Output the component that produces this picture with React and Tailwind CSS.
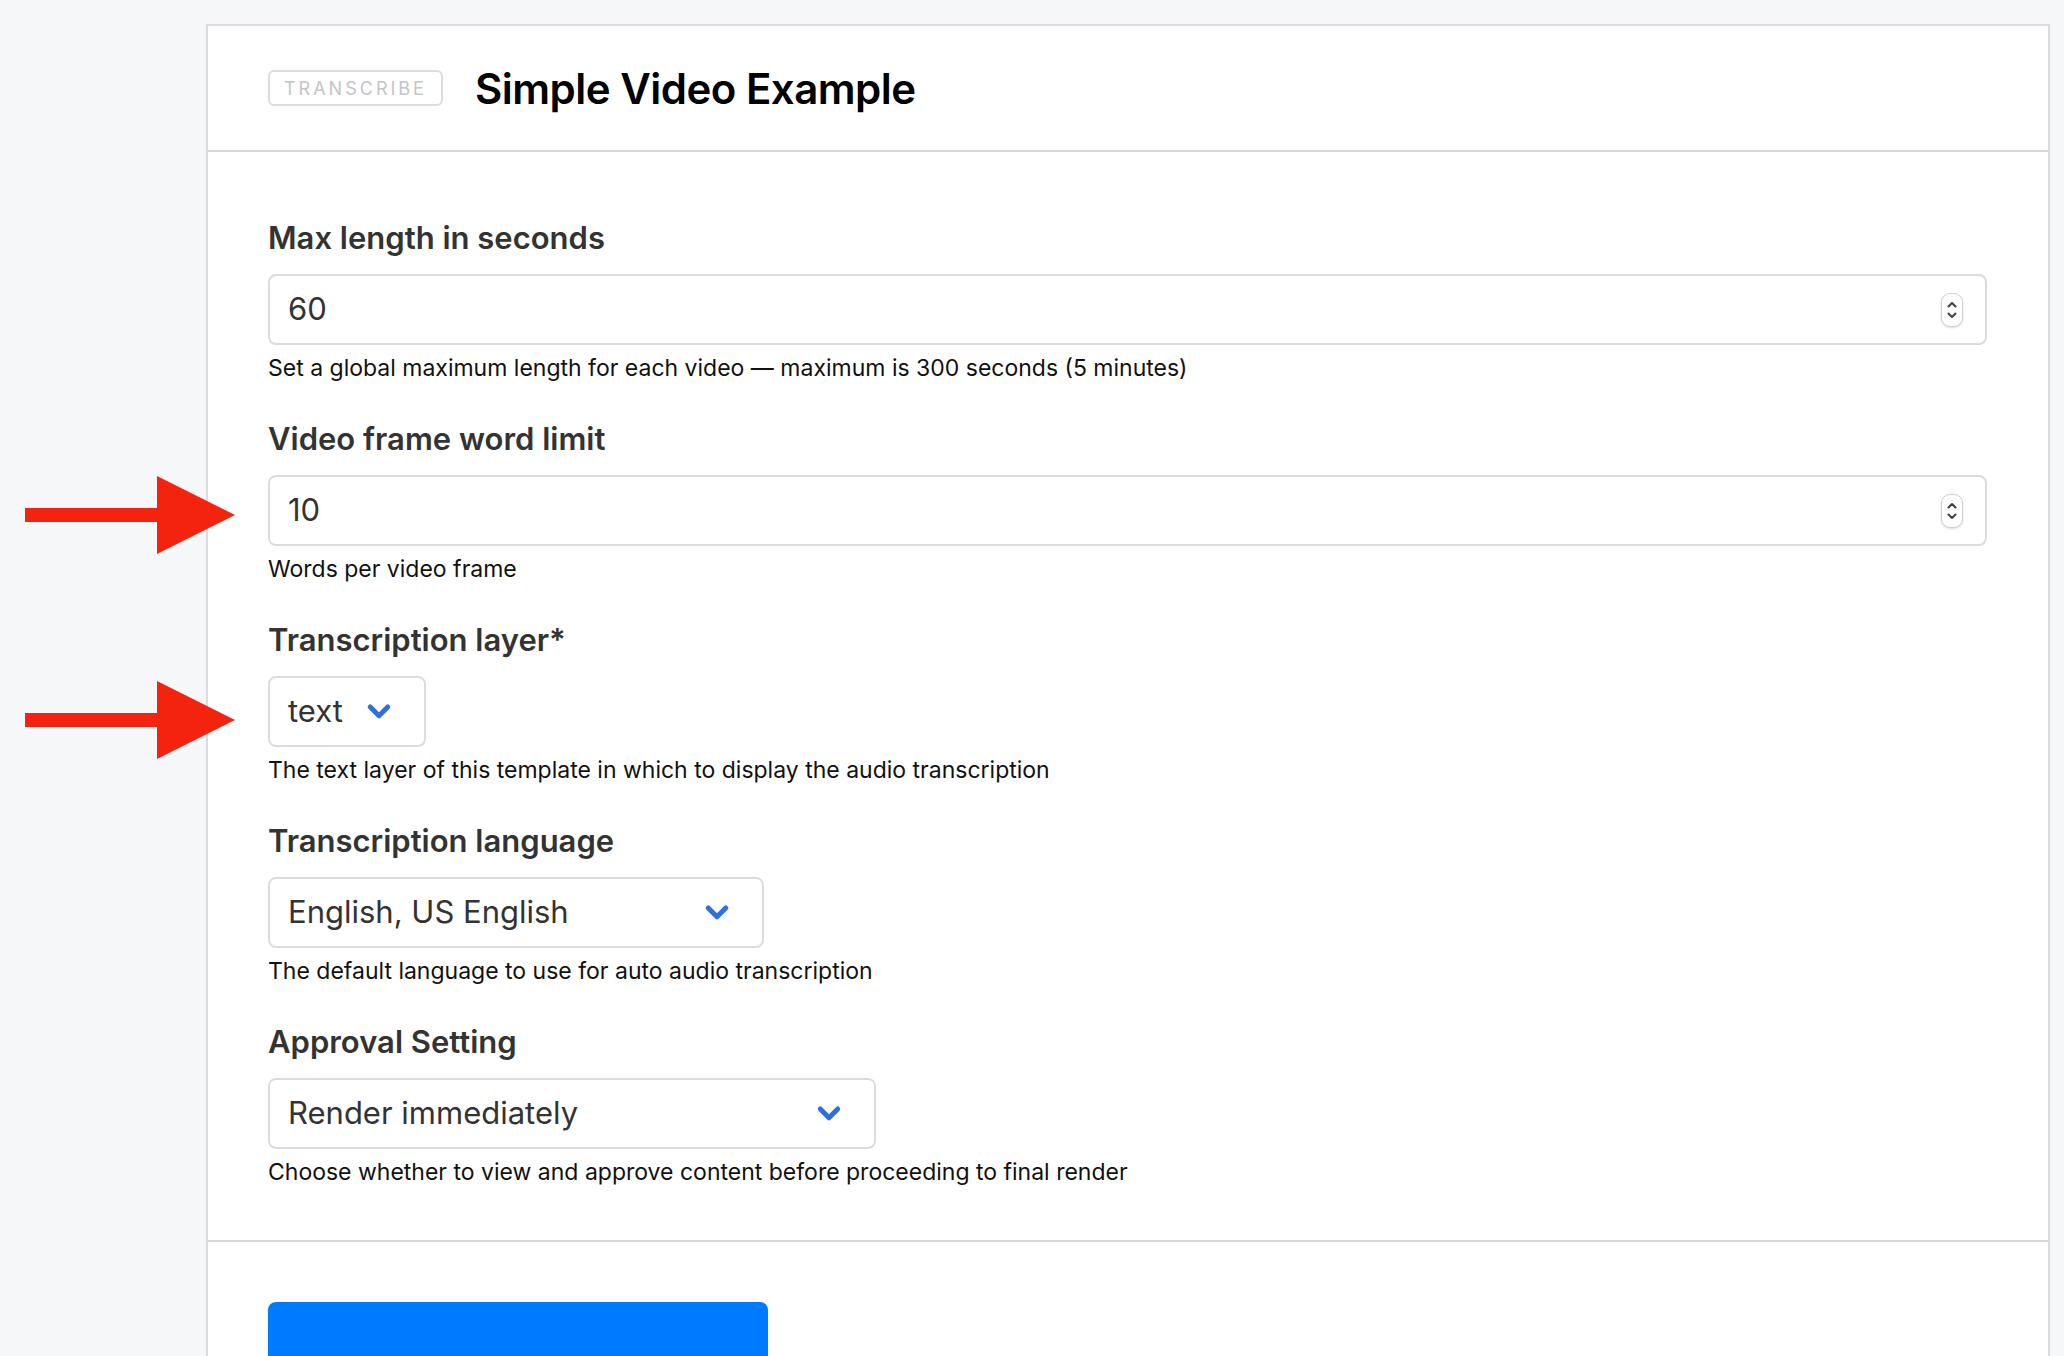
import React from 'react';

const Chevron = ({ className = '' }) => (
  <svg viewBox="0 0 24 24" className={className} fill="none" stroke="#2f6fe0" strokeWidth="4" strokeLinecap="round" strokeLinejoin="round">
    <path d="M5 8l7 7 7-7" />
  </svg>
);

const Spinner = () => (
  <div className="w-[22px] h-[34px] rounded-[9px] border border-[#d0d0d4] shadow-sm flex flex-col items-center justify-center bg-white">
    <svg viewBox="0 0 12 20" className="w-[14px] h-[26px]" fill="none" stroke="#444" strokeWidth="1.8" strokeLinecap="round" strokeLinejoin="round">
      <path d="M3 7l3-3 3 3M3 13l3 3 3-3" />
    </svg>
  </div>
);

const Arrow = ({ top }) => (
  <svg className="absolute left-[25px]" style={{ top }} width="210" height="78" viewBox="0 0 210 78">
    <rect x="0" y="32" width="135" height="14" fill="#f4230f" />
    <polygon points="132,0 210,39 132,78" fill="#f4230f" />
  </svg>
);

const Field = ({ label, help, children }) => (
  <div className="flex flex-col">
    <div className="text-[31px] font-semibold text-[#333] leading-none h-[38px]">{label}</div>
    <div className="mt-[14px]">{children}</div>
    <div className="text-[23px] text-[#111] mt-[12px] leading-none">{help}</div>
  </div>
);

const NumberInput = ({ value }) => (
  <div className="h-[71px] w-[1719px] border-2 border-[#dcdce0] rounded-[8px] flex items-center justify-between pl-[18px] pr-[22px] text-[31px] text-[#333]">
    <span>{value}</span>
    <Spinner />
  </div>
);

const Select = ({ value, w }) => (
  <div className={`h-[71px] ${w} border-2 border-[#dcdce0] rounded-[8px] flex items-center justify-between pl-[18px] pr-[30px] text-[31px] text-[#333]`}>
    <span>{value}</span>
    <Chevron className="w-[30px] h-[30px]" />
  </div>
);

export default function App() {
  return (
    <div className="relative h-[1356px] overflow-hidden bg-[#f6f7f9] pt-[24px] pl-[206px] pr-[14px]" style={{ fontFamily: 'Inter, "Noto Sans", sans-serif' }}>
      <Arrow top={476} />
      <Arrow top={681} />
      <div className="bg-white border-2 border-[#dcdce0] h-[1400px]">
        <div className="h-[126px] border-b-2 border-[#d8d8dc] flex items-center pl-[60px] gap-[32px]">
          <div className="h-[36px] px-[14px] flex items-center border-2 border-[#dcdce0] rounded-[6px] text-[18px] tracking-[3px] text-[#c4c4c8]">TRANSCRIBE</div>
          <div className="text-[42px] font-semibold text-black tracking-[-0.5px]">Simple Video Example</div>
        </div>
        <div className="pl-[60px] pt-[70px] pb-[56px] flex flex-col gap-[43px] border-b-2 border-[#d8d8dc]">
          <Field label="Max length in seconds" help="Set a global maximum length for each video — maximum is 300 seconds (5 minutes)">
            <NumberInput value="60" />
          </Field>
          <Field label="Video frame word limit" help="Words per video frame">
            <NumberInput value="10" />
          </Field>
          <Field label="Transcription layer*" help="The text layer of this template in which to display the audio transcription">
            <Select value="text" w="w-[158px]" />
          </Field>
          <Field label="Transcription language" help="The default language to use for auto audio transcription">
            <Select value="English, US English" w="w-[496px]" />
          </Field>
          <Field label="Approval Setting" help="Choose whether to view and approve content before proceeding to final render">
            <Select value="Render immediately" w="w-[608px]" />
          </Field>
        </div>
        <div className="pl-[60px] pt-[60px]">
          <div className="w-[500px] h-[80px] bg-[#007aff] rounded-[8px]" />
        </div>
      </div>
    </div>
  );
}
